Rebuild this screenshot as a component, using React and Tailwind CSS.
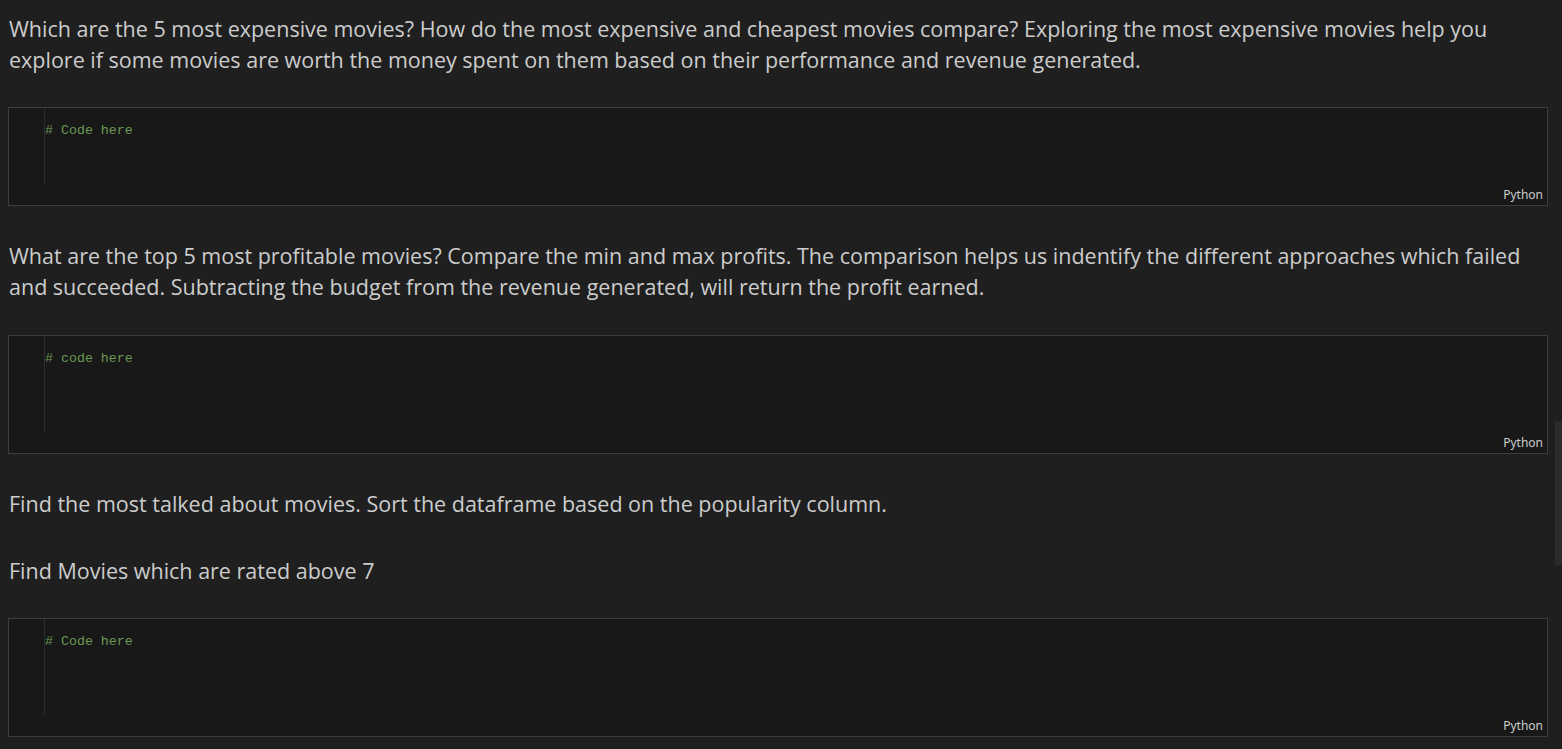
export default function App() {
    const cells = [
        {
            text: "Which are the 5 most expensive movies? How do the most expensive and cheapest movies compare? Exploring the most expensive movies help you explore if some movies are worth the money spent on them based on their performance and revenue generated.",
            code: "# Code here",
            height: 76,
            gap: "mt-[32px]"
        },
        {
            text: "What are the top 5 most profitable movies? Compare the min and max profits. The comparison helps us indentify the different approaches which failed and succeeded. Subtracting the budget from the revenue generated, will return the profit earned.",
            code: "# code here",
            height: 96,
            gap: "mt-[33px]"
        }
    ];

    return (
        <div className="bg-[#1f1f1f] relative overflow-hidden pt-[13px] pl-[8px] pr-[14px]" style={{ height: 749 }}>
            {cells.map((c, i) => (
                <div key={i} className={i === 0 ? "" : "mt-[34px]"}>
                    <Markdown>{c.text}</Markdown>
                    <CodeCell code={c.code} height={c.height} gap={c.gap} />
                </div>
            ))}

            <div className="mt-[34px]">
                <Markdown>Find the most talked about movies. Sort the dataframe based on the popularity column.</Markdown>
            </div>
            <div className="mt-[36px]">
                <Markdown>Find Movies which are rated above 7</Markdown>
                <CodeCell code="# Code here" height={96} gap="mt-[32px]" />
            </div>

            {/* scrollbar */}
            <div className="absolute right-0 top-[421px] w-[7px] h-[144px] bg-[#2b2b2b]" />
        </div>
    );
}

function Markdown({ children }) {
    return (
        <p className="pl-[1px] text-[#cccccc] text-[21.5px] leading-[31px] font-['Open_Sans',sans-serif]">
            {children}
        </p>
    );
}

function CodeCell({ code, height, gap }) {
    return (
        <div className={gap + " border border-[#3c3c3c] bg-[#181818]"}>
            <div className="flex">
                <div className="w-[35px] shrink-0" />
                <div
                    className="flex-1 border-l border-[#2e2e2e] pt-[13px]"
                    style={{ height }}
                >
                    <div className="text-[#6a9955] text-[13.3px] leading-[19px] font-['Liberation_Mono',monospace]">
                        {code}
                    </div>
                </div>
            </div>
            <div className="flex justify-end pr-[4px] h-[21px] items-center">
                <span className="text-[#cccccc] text-[12px] font-['Noto_Sans',sans-serif]">Python</span>
            </div>
        </div>
    );
}
